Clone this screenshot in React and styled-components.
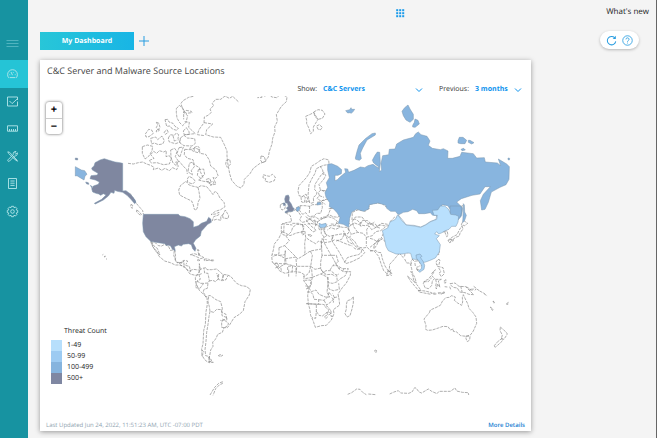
import React from "react";
import styled, { createGlobalStyle } from "styled-components";

const Global = createGlobalStyle`
  *, *::before, *::after { box-sizing: border-box; }
  body { margin: 0; background: #f4f4f4; color: #444; font-family: "Open Sans", "Noto Sans", sans-serif; font-size: 7px; text-rendering: geometricPrecision; }
  button, select { font: inherit; color: inherit; border: 0; background: none; padding: 0; margin: 0; cursor: pointer; text-rendering: inherit; }
`;

const Page = styled.div`
  display: flex;
  min-height: 100vh;
  border-right: 1px solid #666;
`;

const Sidebar = styled.nav`
  flex: none;
  width: 28px;
  display: flex;
  flex-direction: column;
  background: #1793a1;
`;

const NavButton = styled.button`
  display: flex;
  align-items: center;
  width: 100%;
  padding-left: 6px;
  color: #b4e6ea;
  background: ${(p) => (p.$active ? "#25c4d6" : "transparent")};
`;

const MenuButton = styled(NavButton)`
  height: 60px;
  padding-top: 27px;
  color: #5fbcc6;
`;

const NavList = styled.div`
  display: grid;
  grid-auto-rows: 1fr;
  height: 165px;
`;

const Main = styled.main`
  flex: 1;
  min-width: 0;
  display: flex;
  flex-direction: column;
  padding: 0 7px 7px 12px;
`;

const TopBar = styled.header`
  display: grid;
  grid-template-columns: 1fr auto 244px;
  align-items: center;
  height: 26px;
`;

const AppsButton = styled.button`
  display: flex;
  color: #1a9bea;
`;

const NewsLink = styled.a`
  justify-self: end;
  padding-bottom: 2px;
  color: #222;
  font-size: 8px;
  line-height: 12px;
  text-decoration: none;
`;

const TabBar = styled.div`
  display: flex;
  align-items: center;
  gap: 5px;
  height: 30px;
`;

const Tab = styled.button`
  width: 94px;
  height: 18px;
  color: #fff;
  font-size: 7px;
  font-weight: 700;
  background: linear-gradient(90deg, #28c6d8, #18b5e5);
`;

const IconButton = styled.button`
  display: flex;
  color: #279ce0;
`;

const Actions = styled.div`
  display: flex;
  align-items: center;
  gap: 5px;
  height: 18px;
  margin: 0 10px 2px auto;
  padding: 0 6px;
  border-radius: 9px;
  background: #fff;
  box-shadow: 0 1px 3px rgba(0, 0, 0, 0.25);
`;

const Card = styled.section`
  margin: 4px 118px 0 0;
  background: #fff;
  box-shadow: 0 1px 5px rgba(0, 0, 0, 0.38);
`;

const Title = styled.h1`
  margin: 0;
  padding: 4px 7px 0;
  color: #444;
  font-size: 9px;
  font-weight: 400;
  line-height: 14px;
`;

const Filters = styled.div`
  display: flex;
  align-items: center;
  justify-content: flex-end;
  gap: 16px;
  height: 18px;
  padding: 5px 9px 0 0;
`;

const Filter = styled.label`
  display: flex;
  align-items: center;
  gap: 6px;
  color: #333;
  font-size: 7px;
`;

const SelectBox = styled.span`
  display: flex;
  align-items: center;
  width: ${(p) => p.$width};
  color: #0d93ee;
`;

const Select = styled.select`
  appearance: none;
  flex: 1;
  min-width: 0;
  font-weight: 700;
`;

const MapArea = styled.div`
  position: relative;
`;

const MapSvg = styled.svg`
  display: block;
  width: 100%;
  height: auto;
`;

const ZoomControl = styled.div`
  position: absolute;
  top: 6px;
  left: 6px;
  display: flex;
  flex-direction: column;
  width: 16px;
  border-radius: 3px;
  background: #fff;
  box-shadow: 0 0 3px rgba(0, 0, 0, 0.65);
`;

const ZoomButton = styled.button`
  height: 16px;
  color: #000;
  font-size: 11px;
  font-weight: 700;
  line-height: 16px;
  & + & { border-top: 1px solid #ccc; }
`;

const Legend = styled.div`
  position: absolute;
  left: 11px;
  bottom: 30px;
`;

const LegendTitle = styled.h2`
  margin: 0 0 3px 13px;
  font-size: 7px;
  font-weight: 400;
  line-height: 11px;
  color: #222;
`;

const LegendList = styled.ul`
  margin: 0;
  padding: 0;
  list-style: none;
`;

const LegendItem = styled.li`
  display: flex;
  align-items: center;
  gap: 5px;
  height: 11px;
  color: #222;
  font-size: 7px;
  &::before {
    content: "";
    width: 11px;
    height: 11px;
    background: ${(p) => p.$color};
  }
`;

const Footer = styled.footer`
  display: flex;
  justify-content: space-between;
  align-items: center;
  height: 17px;
  padding: 4px 6px 0;
  font-size: 6px;
  color: #8fa3b0;
`;

const DetailsLink = styled.a`
  color: #1c7fd2;
  font-size: 6px;
  font-weight: 600;
  text-decoration: none;
`;

const Icon = ({ size = 13, children, w = 1 }) => (
  <svg width={size} height={size} viewBox="0 0 13 13" fill="none" stroke="currentColor" strokeWidth={w} aria-hidden="true">
    {children}
  </svg>
);

const Chevron = () => (
  <svg width="8" height="6" viewBox="0 0 8 6" fill="none" stroke="currentColor" aria-hidden="true">
    <path d="M1 1.5l3 3 3-3" />
  </svg>
);

const NAV = [
  ["Dashboard", <path key="a" d="M3 10.6H2.6A4.7 4.7 0 0 1 1.6 7.6a4.9 4.9 0 0 1 9.8 0 4.7 4.7 0 0 1-1 3H10M3.6 10.6h5.8M6.5 8.2L5 5M3.4 7.7h.8M8.8 7.7h.8M7.5 5l-.2.7" />],
  ["Policies", <path key="a" d="M11.5 5V2h-10v9h10V6.5M3.5 6l2.6 2.6L11.2 4" />],
  ["Devices", <path key="a" d="M1.5 3.8h10v5.4h-10zM3.5 9V7M5.5 9V7M7.5 9V7M9.5 9V7" />],
  ["Tools", <path key="a" d="M1.8 1.8l1.8.5 6 6.4 1.8 2.5-2.6-1.8-6.3-6zM11.4 2.8L9.8 4.2 8.6 3 10 1.5C8 1.2 6.8 2.8 7.3 4.5L2 9.8c-.8 1 .6 2.3 1.5 1.3L8.6 5.9c1.7.4 3.1-1 2.8-3.1zM8 7.5l3.4 3.2" />],
  ["Reports", <path key="a" d="M2.5 1.5h8v10h-8zM4.4 4h4.2M4.4 6.2h4.2M4.4 8.4h4.2" />],
  ["Settings", <React.Fragment key="a"><path d="M5.4 1.3h2.2l.4 1.4 1.4-.7 1.5 1.5-.7 1.4 1.5.5v2.2l-1.5.4.7 1.5-1.5 1.5-1.4-.8-.4 1.5H5.4L5 10.2l-1.4.8L2.1 9.5 2.8 8l-1.5-.4V5.4l1.5-.5-.7-1.4L3.6 2l1.4.7z" /><circle cx="6.5" cy="6.5" r="1.8" /></React.Fragment>],
];

const LEGEND = [
  ["1-49", "#b7dffc"],
  ["50-99", "#9dcbf2"],
  ["100-499", "#86b4de"],
  ["500+", "#7f87a2"],
];

const LIGHT = "#b9e0fd";
const BLUE = "#88b5df";
const SLATE = "#7f87a0";

/* Each region's outline is drawn in thirds of a map unit from its own origin. */
const REGIONS = [
  { name: "Canada", x: 130, y: 90, d: `
    M-6 220L10 222 25 218 38 216 50 222 62 226 72 232 70 239 85 234 95 241 105 235 118 242 128 233 140 239 145 228 137 216 148 214 160 229 170 238 172 252M0 310L8 322 14 334 24 346 38 362 40 372M3 343l5 3-1 9-5-4zM20 360l6 4 9 10-5 1-10-9z
    M205 293L200 291 186 288 176 284 168 274 152 286 146 300 149 315 168 325 185 333 190 345 193 358 199 360 203 350 204 337 210 325 207 305 204 292 213 287 230 290 241 303 249 314 255 304 262 309 270 324 282 337 285 350 272 359 256 364 243 374 256 372 267 367 266 375 251 380 247 392 259 388 273 391 272 379 279 374M278 376l8-16 6 10 4 7-2 9-15-2z
    M37 170l15-5 16 4-2 13-10 17-11 8-8-17zM62 194l9-10 9 6 8-8 13 4 8-4-1 18 10-3 6 10-6 15-18 2-19-6-16 1-8-7 15-7zM122 180l12-5 7 10-5 15 9 13-6 14-10-8-6-18zM147 173l13-2-6 17-5 14-8-12z
    M164 178l17 1 14-5 13 5 2 11 17 3 11 17 4 18 16 12 6 17-7 8-8-3 9 20-13 3-14-10-10-1-16-4 14-8-8-17-3-12-15-9-4-15-17-4-9-11zM205 239l16-2 3 17-13 10-9-8zM191 185l-12-10 7-5M178 220l10-4 5 14-9 11 3 14-13-10zM172 267l5-8 12 6 7 9-8 8-15-5zM229 268l10-3 3 8-11 2zM237 278l12-4 3 5-11 7z
    M46 132l10-14 9 2 5 10-13 10-9 1zM62 145l15-4 6 8 13-11 7 14-5 10-13 2-12-5-8 3zM79 97l7 2 4 13-5 7-6-6 4-9zM78 123l8-7 2 5-8 5zM105 89l8-1 4 8 12 4 6 9 10 6-5 6-13-4-7-9-10 1zM115 144l6-10 12 2 6-7 7 5-2 12 6 10-13 5-12-3-8-3zM129 137l4 16 9-3M102 127l9-8 4 8-9 6zM139 56l9-10 11 9 4 14 10 8-5 20-10 10-9-9-8-14-2-16zM151 144l11-8 10 8 22 2 2 14-10 8-24-1-12-8zM160 123l9-10 8 12 1 8-15 2z
    M190 19l-14 3-17 10-6 8 4 15 11 15 18-2-2-4-16-3-7 5 0 22M164 95l14 2-2 15 20 19-32 3M192 173l11-5 7 8-6 12-11-3z` },
  { name: "Greenland", x: 130, y: 90, d: `M325 35L308 19 298 25 285 18 272 28 257 28 246 41 252 46 240 57 244 67 234 76 223 81 222 98 215 108 207 119 202 134 224 137M222 98l26 4-18 17-3 15 23 7 22 1 11 22 8 19 0 15 2 20 6 33 6 20 16 18 12 5 9-12 1-14 17-17 10-16 20-15 15-5 10-14 3-17 8-22 2-17 7-20-1-15 8-16-3-20 15-25 15-14 2-14-18-10-13 12-15-2-6-8-15 5-10-6 2 10-14 1M289 211l10-3 3 14-10 10-5-9zM393 198l10 2 4 14-10 4-5-7z` },
  { name: "Iceland", x: 260, y: 90, d: `M10 254l9 3 9 2 9-6 9 8-3 11-15 5-13-4 2-7-8-2z` },
  { name: "Mexico and the Caribbean", x: 130, y: 200, d: `M62 124l15 5 8 8 10 1 9-5 12 7 5 11 10-1 4 3 2 19-1 10 5 6 15 1 8-8 9 2-5 10M62 125l6 15 14 16 4 12 18 15 17 5 15 7 15 0 12 7 7 6 10 14 16 4 14-3 5-2M64 124l8 14 10 7 8 20-14-12-8-15zM147 191l14-10 1 14 16 4 4 16-9-5-10-11-13-4M180 212l10-4 16 2M181 164l12-3 16 5 13 7-10 3-17-8zM223 177l11 0 7 4-18 1zM203 179l6 1-1 3-5-1zM243 180l8 0 0 3-8-1zM202 149l5 1-2 5zM205 158l4 4-2 5zM133 152l-2 13 5 15 5 7 16 1` },
  { name: "South America", x: 130, y: 200, d: `M208 210l10-5 10-2 3 6 14 0 15-2 9 8 9 8 15 2 10 5 8 10 9 10 14 7 14 2 13 9-3 17-13 20-5 27-12 11-16 10-12 20-8 10-10 0-5 14-14 6-5 13-10 10 1 13-7 11-3 18-3 6 10 7-12 6-10-8-8-13-1-20 4-14 2-40 5-19 2-38 4-22-1-20-23-22-11-23-1-15 10-15 5-10-3-17zM208 210l-1 14 4 14-10 5-4 20 13 2 11-15 13-1 4-7-4-22-10-1-2-14M237 243l11-2 9 4 8-9-5-17M266 222l-1 16 10 4 5-17M280 225l-2 17 10-3 6-13M201 243l11 7 8 0M234 250l-2 15-10 3-3 10 6 5 2 8 13-5 18 13 14 6 5 20-2 12 13 6 2 12-12 7-7-1M236 290l-2 15 4 15 2 14 11 3 9-9 15 1 1 18 15 6-1 8M280 357l-5 10 0 15 9 1 10-7 1-7-10-7-7-5M240 334l-3 15-3 24-4 24-2 27-3 25 2 18 12 3M238 470l-1 13 13 4-13 1zM216 450l4 4-2 10-4 6M265 467l5-3 8 2-7 4z` },
  { name: "Antarctic Peninsula", x: 130, y: 200, d: `M240 585l14-23 12-12 12-5-1 6-8 3-12 12-8 20` },
  { name: "Pacific islands", x: 130, y: 200, d: `M-76 172l2-4-4 2zM-83 165l3-2M-72 176l3 2` },
  { name: "Svalbard", x: 260, y: 90, d: `M137 79l14-6 11-6 5 10 7 11-8 13-6 10 0 13-8 7-6-18-6-12 0-10zM161 66l13-7 13 2 8 11-8 13-13 3-9-8zM170 108l8-4 9 8-5 7-8-1z` },
  { name: "Scandinavia", x: 260, y: 90, d: `M207 221l-1-11-14-4-12 6-11 8-15 9-5 19-10 15-13 14-9 10-3 16 3 14 10 3 11-8 3 10 5 13 7 5 8-3-1-15 9-7 2-9-7-7 1-16 11-17 8-12 8-7 5 10-7 13-13 13 4 16 11 5 16-4 8-18 1-20-8-17zM149 338l-5-21 3-33 8-17 10-17 4-14 21-10 13-2M180 228l8 12 2 15M123 323l6-6 7 5-3 16-8-2zM138 332l5 3-4 4z` },
  { name: "Europe", x: 260, y: 90, d: `M61 344l10-5 6 7-3 11-8 3-5-7zM77 368l17-3 11-5 4-6 12-7 14 0 13 2 10-5 19 0 9-12 12-4 13 0 10 12M195 302l-13-1-7 6 3 10-7 8 10 7 14-1M178 317l14 5M171 337l13-2 12 8M121 347l-2 15 9 11 9-5 10 12 15-2 8-8 12 0 5-17-1-14M149 348l-1 22M107 360l9 7 8 12-5 11 8 7 14-3 10-9 14-5 12 8 17-4 11-11 8-19 16-1M77 368l14 9 4 18-17 3-14 6 0 21 6 10 13 1 11-11 4-13 12-9 12 1 14-1 14 14 9 9 10-5-16-13-14-17 9-5 15 13 20 14 1 18 9 11 7-5-6-11 0-14 7-9M97 400l18 0 9 3M66 401l31 4M72 407l-1 24M137 380l10 7 13 5 13 3-2 10-18-5-10 2M164 389l4 15-5 9M173 395l16-10 16-5 16 5 12 10-5 8-16-1M206 356l19-1 10 10 7 7-8 10-15-2-12-6-8 6-17 3M228 397l7 5 5 10-13 6-15-5-10 7M192 416l-14 3-3-10M127 403l5 8-2 8zM125 424l6-1 1 10-5 2zM144 434l12 1-5 6zM184 447l16 2` },
  { name: "North Africa", x: 260, y: 210, d: `M66 65l10 4 14 8 19-8 26-5 2 18 12 9 18 10 8-7 17 4 14-2 10-2 8-5M66 65l-10 21-13 16-3 18-5 18 2 19 13 11 9 15 16 7 17-4 14-1 15 2 12 7-2 18 11 15 4 13-3 16 2 25 4 15 3 20 8 18 6 18 18-5 15-1 15-16 8-19-2-12 19-14-2-18-3-15 13-19 12-14 12-23 1-11-21 0-15-9-10-18-8-15-12-20-12-22-6-15 6-6M77 77l11 15-14 15-17 6M57 113l0 18-19 9M74 107l34 34-31 5-19-10-21-2M58 136l17-2 1-12M76 122l-2 40-34-3M108 141l5 6 20-12 2-10-1-25 3-18M133 135l18-12 33-6 0-26M184 94l2 42 43 0M186 136l-4 20 0 20 13 18M151 123l6 13-5 33 13 9 18-4M108 147l2 22 14 0 28 0M77 146l1 15-18 9M77 161l21 6 10 3 0 15M98 167l-2 20M83 180l0-11 13-1M86 179l0 22M110 172l-2 27M42 163l8-4 6 7-10 8M55 175l7-5 2 12M48 172l9-3` },
  { name: "Central Africa", x: 260, y: 210, d: `M152 169l-5 20-10 8-8 2M155 178l2 24-22 4M157 202l-7 30-12 5M157 202l25-10 20 9 2 20-3 26 8 14-13 0-19-8-9-13-14 5-11-17M133 211l18-1 3 14-12 10M183 192l15-10 14 0 16 13 9-3M183 180l16 14 17-1 10 6M204 201l1 17 13 2 14-5-2-20M204 221l3 16 13 5 18-4M238 238l-2-18M141 246l11 0 7 8 3 14 14 1 0 14-37-2M176 269l16 2 12-11 3-13M192 271l8 14 15-11 8-11-5-12M139 281l37 2 13 0 13 6 11 14M169 285l0 19-2 21-11-2M169 304l8 12 10 2 13-10 7-7-14-13M200 308l5 8 8-6-7-4zM194 320l5-4 4 5-6 5zM213 303l0 16 7 0M222 263l14-3M207 247l9 11M210 180l8-13 15 0 6 10M229 136l6 20-16 10M249 176l16 0-9 21-16 10-5 5M237 170l14 8-4 8M136 228l7 0M215 263l6 5-1 10` },
  { name: "Madagascar", x: 260, y: 210, d: `M280 261l-8 8-10 3-3 12 0 13-4 14 6 10 9-4 6-20 4-18z` },
  { name: "Middle East", x: 260, y: 210, d: `M195 52l14-5 19 0 20 5 14 0 6 10-4 9-20 1-18 3-18 4-14-9-3-12M215 90l4-15M219 78l-3 15 12 18 10 16 10 18 9 16 19-6 24-12 14-15-5-9-14-4-11-8-11-16-9-11-9-7-5-11M250 72l8 5 6 18 13 7M228 93l17-5 8-15M230 90l29 12 18 6M254 157l8-14 15-5 18-4 8-5 3-11M300 117l-11 1-8-5M264 57l10 15-5 10 15 12 10 17 14 3 14-2 8 9 14 2M273 45l11-6 16 6 15 2 15-3 13-8M277 72l16-5 17 3 9 12 0 27M319 82l18-5 10-12 15-3 14-11M293 67l-12-17-4-16 9-13 20 0M306 21l14 18 12 3 14 0 5 7 14-9 18 3M305 36l-6 3 4 11M321 74l-1-15 7-11 8 11 15-8 12 4M341 115l3-14 17-11 13-28M345 120l9 7 9 1 4 18 8 22 10 15 5 3M388 186l4-7M263 35l10 10-9 10 7 4` },
  { name: "Kazakhstan", x: 260, y: 90, d: `M277 367l18-8 20 5 13-9-2-11 20-5 20 1 10 9 18 4 14 9 11 8-5 12-11 0-12 12 1 13-16 1-15-3-14 7-12-9-12-11-15-1-5 10-10-9-8-5-9 3z` },
  { name: "South and Southeast Asia", x: 370, y: 190, d: `M0 145l10 3 14 8 14-10 17 21 24 9 18-1 15-7 9 1M0 183l12-1 8 10 6 7 7 22 8 21 9 8 8-13 1-14 12-13 15-18 10-5 5-5 12 7-1-16 12-10M0 172l15-12 12-14M27 146l-6 18-9 13M57 168l1 8 25 6 3-5M86 180l14 3 5 12-5 8-8-8-1-10M104 207l6 12 10 0 5 17 2 12 8 16 4 14-7-4-4-17-6-14M122 174l1 14 9 5-3 13-6 8 2 13M134 196l-6 13 5 5 12-2 8 12M136 228l-2-13M139 237l8 3M129 190l15 10 1 11M151 208l5 12-2 8-6 0M50 257l3-11 9-3-2 12zM61 245l5 7-3 6M160 206l4-4 2 6zM203 193l1-12 4 4-2 9zM143 243l-4-11 7-2` },
  { name: "Indonesia and the Philippines", x: 370, y: 190, d: `M112 258l15 12 14 14 11 16-5 3-12-14-12-14zM145 301l20 2 20 5-2 5-20-4-16-3zM160 280l5-8 10-4 9-12 10 9-7 8-2 14-10 9-10-3zM161 275l14 0 10-12M197 268l2 9-2 12 2 8 4-15 7 10-5-19 9-5zM204 208l6 2-3 14-7 1-2-9zM203 229l16 4 4 18-9 9-7-11 6-4zM185 250l11-11-9 15zM188 310l8-1 3 3-9 1zM205 308l13 1-2 3-10-1zM223 272l5-3-1 10-4 0zM240 281l15-2 12 10 20 1 15 15 9 9-14-1-12-5-16-2-7-12-13-2-5-5zM272 288l5 20M289 290l12 8M224 290l8 1M239 290l3 8M219 306l6 1-5 5z` },
  { name: "Melanesia", x: 370, y: 190, d: `M299 299l12-3-5 6zM311 289l8 6-4 6M320 297l8 5M329 303l15 8M342 311l10 7M369 333l4 3-1 4zM361 351l9 8-3 2zM409 342l6-5-1 6z` },
  { name: "Australia", x: 370, y: 190, d: `M178 368l3-8 14-6 16-8 7-14 10-9 10-1 7-5 11 4-3 10 10 8 12 7 3-10-1-13 3-9 6 13 7 14 4 14 12 13 9 13 2 19-10 23-8 11-13 5-17-2-12-11-10-2 0-7-9 3-7-10-15-1-14 5-18 6-14 1-6-3 1-11-6-20zM288 438l12 1-1 11-7 5-4-9z` },
  { name: "New Zealand", x: 370, y: 190, d: `M391 411l8 7 10 9 3 5-10 16-8-2 3-11-7-13zM396 445l-13 10-12 14 6 2 10-9 10-9z` },
  { name: "Japan and Korea", x: 370, y: 190, d: `M213 122l11 3 6 15 4-3-2-12-10-4M218 126l13-4M280 91l13 9-9 7-10-3 3-7zM276 107l3 10-9 12-2 9-11 4-9 7-9-2 10-7 12-6 7-14zM234 150l8-1 0 8-5 1zM244 150l8 0-4 4zM277 45l-4 17-10 16-10 18` },
  { name: "Antarctica", x: 330, y: 330, d: `M53 193l12-5 15-11 10 1 9 10 10 6M115 192l22 2M179 192l13-6 13-4 7 7 24 1 10-4 8-13 5 2 8 11 8 3 20-12 10 7 16 7 6-7 34 0 14-10 5 9 17 4 18 1 1 7M133 62l5-2 4 4-5 3z` },
  { name: "Alaska", x: 40, y: 90, fill: SLATE, d: `M248 220V303L258 302 270 311 281 324 288 337 284 341 272 327 261 316 248 307 232 304 224 301 222 310 213 307 205 318 190 330 166 342 163 340 185 328 198 315 190 311 182 316 176 312 168 310 158 306 155 296 160 288 175 283 178 276 166 270 150 266 153 257 172 255 174 250 157 240 155 234 162 228 165 218 180 210 193 206 205 210 225 216 240 218zM106 204l7 1 0 5-7-1zM137 276l8 2 2 5-7-1zM151 286l6 4-2 3z` },
  { name: "United States", x: 130, y: 200, fill: SLATE, d: `M40 43L145 43 150 48 165 50 180 56 190 65 190 82 205 77 214 70 230 64 236 52 243 58 244 67 233 73 223 84 214 94 211 108 197 119 190 130 198 145 195 154 188 146 184 134 176 131 160 133 154 138 145 135 133 140 136 152 127 148 122 138 116 136 108 136 105 131 85 128 62 124 48 110 40 95 38 70zM10-1l5 0 2 8-5-1z` },
  { name: "Chukotka", x: 40, y: 90, fill: BLUE, d: `M106 230l18 10 10 2 7 11-6 5-3 12-15-9-6-4-5 1z` },
  { name: "United Kingdom", x: 260, y: 90, fill: SLATE, d: `M77 317l8-2 3 7-1 10 7 10 4 10 5 4-5 8-13 1-9 4-1-4 9-5-5-6 6-5-3-9-6-2-2-11zM69 339l6 0 1 7-5 1z` },
  { name: "Netherlands", x: 260, y: 90, fill: BLUE, d: `M109 353l8-3 3 5-5 9-6-2zM171 339l10-2 2 6-11 2z` },
  { name: "Bulgaria", x: 260, y: 90, fill: "#9dcbf2", d: `M177 400l8 3 13-3 1 7-5 5-14 1z` },
  { name: "Russia", x: 260, y: 90, fill: BLUE, d: `M203 223L215 221 233 229 245 239 244 251 234 256 225 256 225 272 232 269 241 260 257 247 254 236 263 237 266 247 282 241 301 231 314 233 324 227 339 223 356 235 355 230 341 219 337 211 345 196 352 186 359 187 361 219 358 245 365 240 363 221 368 197 376 196 386 194 388 178 405 177 410 162 430 150 460 142 467 131 475 126 483 134 501 139 510 153 505 166 517 175 541 179 550 176 564 183 563 205 577 205 600 199 605 187 640 191 650 204 673 203 676 216 712 219 722 227 715 207 740 222 748 230 747 268 738 284 720 292 694 306 685 337 675 358 665 360 661 332 670 313 691 290 675 290 660 312 636 316 604 326 590 336 608 354 605 377 592 392 582 400 579 390 586 378 576 365 563 347 546 344 543 364 526 382 490 378 464 366 440 369 426 376 413 372 406 364 392 364 380 355 377 346 355 339 328 344 326 357 311 364 290 358 275 366 269 385 266 412 250 403 235 400 240 383 232 369 220 356 208 350 209 338 198 322 195 308 203 292 199 278 208 263 203 240zM286 204l5-20 6-19 19-19 20-15 10-2 0 6-25 15-13 24-7 16 3 16-6 5-11-3zM257 62l12-3 4-6 2 5 9 0-4 6-6 6-4-2-7 1z` },
  { name: "Russian islands", x: 370, y: 90, fill: BLUE, d: `M96 64l8-11 10-8 6 12 10 16 0 15-10 9-12-7-8-13zM128 106l5-9 2-10 9 4 4 11-7 5-5 5-8-1zM264 152l4-10 11 0 11 9-5 10-13 0-8-2zM295 151l5 0 12 7-7 4-10-5zM273 178l8-3 5 5-10 2zM414 204l5 1-1 5-4-1z` },
  { name: "Sakhalin", x: 370, y: 190, fill: BLUE, d: `M280 41l3 4 1 21 5 10-5 15-6 7 1-18 1-15zM240 48l30 0 3 0 2 18-5 16-14 15-12 6-5-3 1-30z` },
  { name: "Mongolia", x: 370, y: 190, fill: "#fff", d: `M85 75l15-8 14-2 14-7 12 4 6 9 18 0 17-3 7 8 12 0-2 12-18 7-13 9-15 7-20-5-23-1-13-17z` },
  { name: "China", x: 370, y: 190, fill: LIGHT, d: `M37 122l16-8 7-18 16-8 7-14 12 17 13 14 25 3 19 4 15-7 15-10 18-7 2-12-10 0-5-15 16-1 8-12 13 0 12 10 6 15 15 2 9 4-2 17-6 13-13 0-8 9-13 5-10 6-8 3-6-7-6 7 14 5-9 9 12 18-3 22-12 18-18 8-14 5-12-2-7-6-18-2-5-17-9-1-17 3-18 0-23-10-7-13-3-15z` },
  { name: "Vietnam", x: 370, y: 190, fill: "#a9d3f5", d: `M138 195l12-3 6 7-5 3 8 12 5 12-2 12-13 9-4-4 9-7 1-9-8-13-8-10z` },
];

function WorldMap() {
  return (
    <MapSvg viewBox="40 96 491 318" role="img" aria-label="World map of threat sources by country">
      {REGIONS.map(({ name, x, y, d, fill }) => (
        <path
          key={name}
          d={d}
          transform={`translate(${x} ${y}) scale(${1 / 3})`}
          fill={fill || "none"}
          fillRule="evenodd"
          stroke={fill ? "#7894ad" : "#8c8c8c"}
          strokeWidth={fill ? 0.5 : 0.7}
          strokeDasharray={fill ? "none" : "3 1"}
          strokeLinejoin="round"
          vectorEffect="non-scaling-stroke"
        />
      ))}
    </MapSvg>
  );
}

export default function App() {
  return (
    <>
      <Global />
      <Page>
        <Sidebar aria-label="Main">
          <MenuButton aria-label="Menu">
            <Icon w={0.8}><path d="M.5 3.5h12M.5 6.5h12M.5 9.5h12" /></Icon>
          </MenuButton>
          <NavList>
            {NAV.map(([label, shape], i) => (
              <NavButton key={label} $active={i === 0} aria-label={label}>
                <Icon w={0.9}>{shape}</Icon>
              </NavButton>
            ))}
          </NavList>
        </Sidebar>
        <Main>
          <TopBar>
            <span />
            <AppsButton aria-label="Apps">
              <svg width="9" height="9" fill="currentColor" aria-hidden="true">
                {[0, 3, 6].map((y) => [0, 3, 6].map((x) => <rect key={`${x}${y}`} x={x + 0.2} y={y + 0.2} width="2" height="2" />))}
              </svg>
            </AppsButton>
            <NewsLink href="#news">What's new</NewsLink>
          </TopBar>
          <TabBar>
            <Tab>My Dashboard</Tab>
            <IconButton aria-label="Add dashboard">
              <Icon size={10} w={1.3}><path d="M6.5 0v13M0 6.5h13" /></Icon>
            </IconButton>
            <Actions>
              <IconButton aria-label="Refresh">
                <Icon size={11} w={1.2}><path d="M10.2 3.2A5 5 0 1 0 11.5 7.5" /><path d="M11.6 1v3.6H8z" fill="currentColor" stroke="none" /></Icon>
              </IconButton>
              <IconButton aria-label="Help">
                <Icon size={11}><circle cx="6.5" cy="6.5" r="5.6" /><path d="M4.7 5.2a1.8 1.8 0 1 1 2.7 1.5c-.6.4-.9.7-.9 1.4M6.5 9v1" /></Icon>
              </IconButton>
            </Actions>
          </TabBar>
          <Card>
            <Title>C&amp;C Server and Malware Source Locations</Title>
            <Filters>
              <Filter>
                Show:
                <SelectBox $width="100px">
                  <Select defaultValue="cc"><option value="cc">C&amp;C Servers</option></Select>
                  <Chevron />
                </SelectBox>
              </Filter>
              <Filter>
                Previous:
                <SelectBox $width="47px">
                  <Select defaultValue="3"><option value="3">3 months</option></Select>
                  <Chevron />
                </SelectBox>
              </Filter>
            </Filters>
            <MapArea>
              <WorldMap />
              <ZoomControl>
                <ZoomButton aria-label="Zoom in">+</ZoomButton>
                <ZoomButton aria-label="Zoom out">−</ZoomButton>
              </ZoomControl>
              <Legend>
                <LegendTitle>Threat Count</LegendTitle>
                <LegendList>
                  {LEGEND.map(([label, color]) => <LegendItem key={label} $color={color}>{label}</LegendItem>)}
                </LegendList>
              </Legend>
            </MapArea>
            <Footer>
              <span>Last Updated Jun 24, 2022, 11:51:23 AM, UTC -07:00 PDT</span>
              <DetailsLink href="#details">More Details</DetailsLink>
            </Footer>
          </Card>
        </Main>
      </Page>
    </>
  );
}
